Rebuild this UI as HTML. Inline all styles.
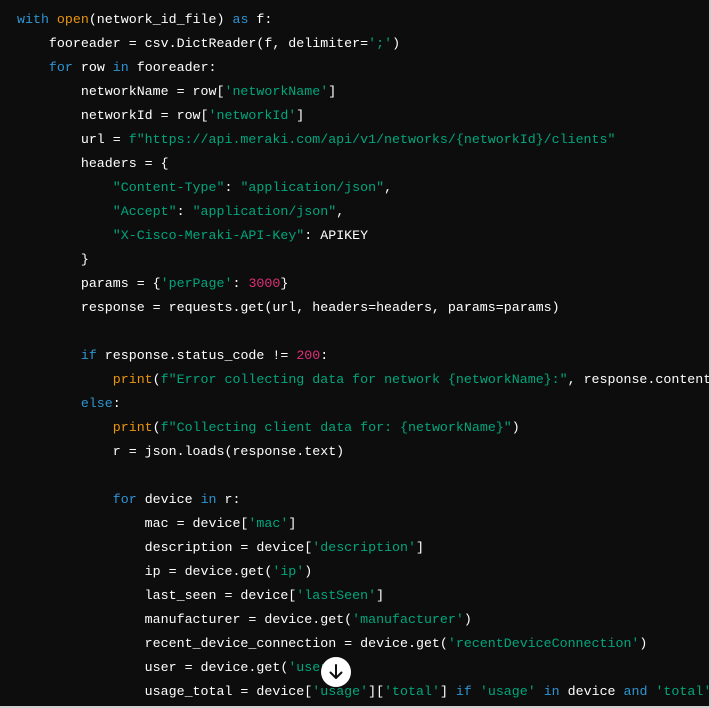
<!DOCTYPE html>
<html><head><style>
html,body{margin:0;padding:0;background:#0d0d0d;}
body{width:711px;height:708px;overflow:hidden;position:relative;}
pre{margin:0;position:absolute;left:17px;top:8px;font-family:"Liberation Mono",monospace;font-size:13.3px;line-height:24px;color:#fff;white-space:pre;}
.k{color:#2e95d3}.s{color:#00a67d}.n{color:#df3079}.f{color:#e9950c}
.btn{position:absolute;left:321px;top:657px;width:30px;height:30px;border-radius:50%;background:#fff;}
.br{position:absolute;right:0;top:0;width:2px;height:708px;background:#d0d0d0;}
.bb{position:absolute;left:0;bottom:0;width:711px;height:2px;background:#d0d0d0;}
</style></head><body>
<pre><span class="k">with</span> <span class="f">open</span>(network_id_file) <span class="k">as</span> f:
    fooreader = csv.DictReader(f, delimiter=<span class="s">';'</span>)
    <span class="k">for</span> row <span class="k">in</span> fooreader:
        networkName = row[<span class="s">'networkName'</span>]
        networkId = row[<span class="s">'networkId'</span>]
        url = <span class="s">f"https://api.meraki.com/api/v1/networks/{networkId}/clients"</span>
        headers = {
            <span class="s">"Content-Type"</span>: <span class="s">"application/json"</span>,
            <span class="s">"Accept"</span>: <span class="s">"application/json"</span>,
            <span class="s">"X-Cisco-Meraki-API-Key"</span>: APIKEY
        }
        params = {<span class="s">'perPage'</span>: <span class="n">3000</span>}
        response = requests.get(url, headers=headers, params=params)

        <span class="k">if</span> response.status_code != <span class="n">200</span>:
            <span class="f">print</span>(<span class="s">f"Error collecting data for network {networkName}:"</span>, response.content)
        <span class="k">else</span>:
            <span class="f">print</span>(<span class="s">f"Collecting client data for: {networkName}"</span>)
            r = json.loads(response.text)

            <span class="k">for</span> device <span class="k">in</span> r:
                mac = device[<span class="s">'mac'</span>]
                description = device[<span class="s">'description'</span>]
                ip = device.get(<span class="s">'ip'</span>)
                last_seen = device[<span class="s">'lastSeen'</span>]
                manufacturer = device.get(<span class="s">'manufacturer'</span>)
                recent_device_connection = device.get(<span class="s">'recentDeviceConnection'</span>)
                user = device.get(<span class="s">'user'</span>)
                usage_total = device[<span class="s">'usage'</span>][<span class="s">'total'</span>] <span class="k">if</span> <span class="s">'usage'</span> <span class="k">in</span> device <span class="k">and</span> <span class="s">'total'</span> <span class="k">in</span></pre>
<div class="btn"><svg width="30" height="30" viewBox="0 0 30 30"><path d="M15 8v13M9.5 15.5L15 21l5.5-5.5" stroke="#0d0d0d" stroke-width="2" fill="none" stroke-linecap="round" stroke-linejoin="round"/></svg></div>
<div class="br"></div><div class="bb"></div>
</body></html>
